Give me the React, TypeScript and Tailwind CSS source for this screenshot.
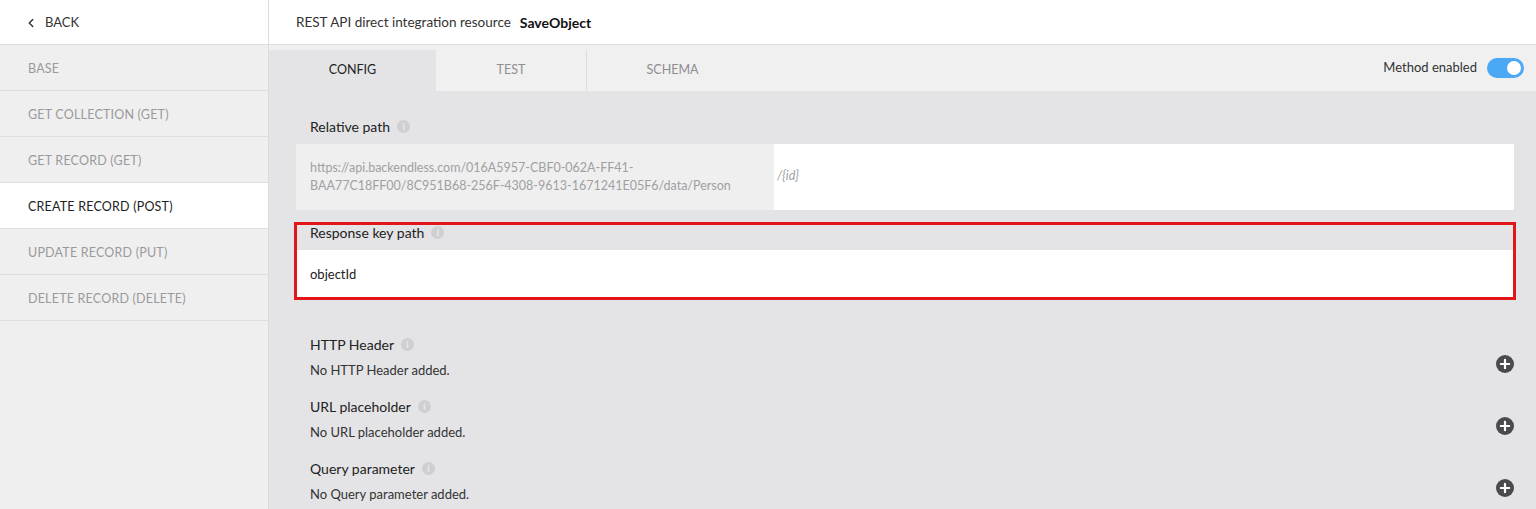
import React from 'react';
import { ChevronLeft } from 'lucide-react';

const sidebarItems = [
  { label: 'BASE', active: false },
  { label: 'GET COLLECTION (GET)', active: false },
  { label: 'GET RECORD (GET)', active: false },
  { label: 'CREATE RECORD (POST)', active: true },
  { label: 'UPDATE RECORD (PUT)', active: false },
  { label: 'DELETE RECORD (DELETE)', active: false },
];

const sections = [
  { title: 'HTTP Header', empty: 'No HTTP Header added.' },
  { title: 'URL placeholder', empty: 'No URL placeholder added.' },
  { title: 'Query parameter', empty: 'No Query parameter added.' },
];

const InfoDot = () => (
  <span className="ml-[7px] inline-flex h-[13px] w-[13px] items-center justify-center rounded-full bg-[#cfcfd1] text-[9px] font-bold leading-none text-[#ececed]">
    i
  </span>
);

const PlusCircle = () => (
  <svg width="18" height="18" viewBox="0 0 18 18">
    <circle cx="9" cy="9" r="9" fill="#4a4a4c" />
    <path d="M9 4.8v8.4M4.8 9h8.4" stroke="#fff" strokeWidth="2.2" strokeLinecap="round" />
  </svg>
);

const App: React.FC = () => {
  return (
    <div className="flex h-[509px] w-[1536px] overflow-hidden bg-[#e4e4e6] font-['Lato',sans-serif] text-[#333]">
      {/* Sidebar */}
      <div className="flex w-[269px] shrink-0 flex-col border-r border-[#dcdcde] bg-[#efeff0]">
        <div className="flex h-[45px] items-center border-b border-[#dcdcde] bg-white pl-[24px] pt-[2px] text-[13px] text-[#333]">
          <ChevronLeft className="mr-[7px] h-[14px] w-[14px]" strokeWidth={2.5} />
          BACK
        </div>
        {sidebarItems.map((item) => (
          <div
            key={item.label}
            className={`flex h-[46px] items-center border-b border-[#dedee0] pl-[28px] pt-[3px] text-[12.5px] tracking-[0.2px] ${
              item.active ? 'bg-white text-[#222]' : 'text-[#9a9a9c]'
            }`}
          >
            {item.label}
          </div>
        ))}
      </div>

      {/* Main */}
      <div className="flex min-w-0 flex-1 flex-col">
        <div className="flex h-[45px] shrink-0 items-center border-b border-[#dcdcde] bg-white pl-[27px] text-[13.5px] text-[#333]">
          REST API direct integration resource
          <span className="ml-[9px] text-[14px] font-bold text-[#111]">SaveObject</span>
        </div>

        <div className="flex h-[46px] shrink-0 items-end bg-[#f0f0f1]">
          <div className="flex h-[41px] w-[167px] items-center justify-center bg-[#e4e4e6] text-[12.5px] text-[#222]">
            CONFIG
          </div>
          <div className="flex h-[41px] w-[150px] items-center justify-center text-[12.5px] text-[#8e8e90]">
            TEST
          </div>
          <div className="flex h-[41px] w-[172px] items-center justify-center border-l border-[#dedee0] text-[12.5px] text-[#8e8e90]">
            SCHEMA
          </div>
          <div className="flex h-[46px] flex-1 items-center justify-end pr-[12px]">
            <span className="mr-[10px] text-[13px] text-[#333]">Method enabled</span>
            <div className="relative h-[20px] w-[37px] rounded-full bg-[#4aa8f5]">
              <div className="absolute right-[3px] top-[3px] h-[14px] w-[14px] rounded-full bg-white" />
            </div>
          </div>
        </div>

        <div className="flex flex-1 flex-col pl-[27px] pr-[22px] pt-[25px]">
          <div className="mb-[7px] flex items-center pl-[14px] text-[14px] text-[#222]">
            Relative path
            <InfoDot />
          </div>
          <div className="flex h-[66px]">
            <div className="flex w-[478px] flex-col justify-center bg-[#efeff0] pl-[14px] text-[12.5px] leading-[18px] text-[#a0a0a2]">
              <div>https://api.backendless.com/016A5957-CBF0-062A-FF41-</div>
              <div>BAA77C18FF00/8C951B68-256F-4308-9613-1671241E05F6/data/Person</div>
            </div>
            <div className="flex-1 bg-white pl-[3px] pt-[23px] text-[12.5px] italic text-[#a0a0a2]">/{'{id}'}</div>
          </div>

          <div className="mx-[-2px] mt-[12px] border-[3px] border-[#e0161a]">
            <div className="flex h-[25px] items-start pl-[13px] pt-[1px] text-[14px] leading-[14px] text-[#222]">
              Response key path
              <InfoDot />
            </div>
            <div className="flex h-[47px] items-center bg-white pl-[13px] pt-[2px] text-[13px] text-[#222]">objectId</div>
          </div>

          <div className="mt-[33px] flex flex-col gap-[14px]">
            {sections.map((s) => (
              <div key={s.title} className="flex items-end justify-between">
                <div className="pl-[14px]">
                  <div className="flex h-[22px] items-center text-[14px] text-[#222]">
                    {s.title}
                    <InfoDot />
                  </div>
                  <div className="mt-[5px] text-[13px] leading-[21px] text-[#333]">{s.empty}</div>
                </div>
                <div className="mb-[8px]">
                  <PlusCircle />
                </div>
              </div>
            ))}
          </div>
        </div>
      </div>
    </div>
  );
};

export default App;
